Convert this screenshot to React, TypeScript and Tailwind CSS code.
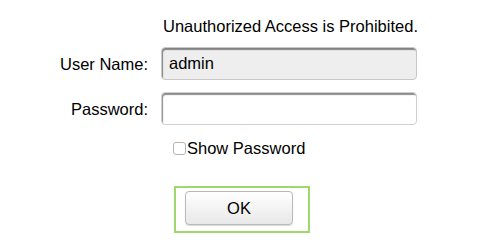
export default function App() {
  return (
    <div
      className="w-[480px] h-[240px] bg-white text-black overflow-hidden"
      style={{ fontFamily: '"Liberation Sans", Arial, sans-serif' }}
    >
      {/* Notice */}
      <p className="pl-[163px] pt-[16px] text-[16.5px] leading-[20px]">
        Unauthorized Access is Prohibited.
      </p>

      {/* User name */}
      <div className="flex items-center mt-[11px]">
        <label className="w-[148px] text-right text-[16.5px] leading-[20px]">User Name:</label>
        <input
          readOnly
          value="admin"
          className="ml-[13px] w-[256px] h-[33px] rounded-[4px] border border-[#c8c8c8] bg-[#eeeeee] pl-[7px] text-[16.5px] outline-none shadow-[inset_1px_2px_1px_rgba(0,0,0,0.45)]"
        />
      </div>

      {/* Password */}
      <div className="flex items-center mt-[12px]">
        <label className="w-[148px] text-right text-[16.5px] leading-[20px]">Password:</label>
        <input
          type="password"
          className="ml-[13px] w-[256px] h-[33px] rounded-[4px] border border-[#d0d0d0] bg-white pl-[7px] text-[16.5px] outline-none shadow-[inset_1px_2px_1px_rgba(0,0,0,0.45)]"
        />
      </div>

      {/* Show password */}
      <div className="flex items-center pl-[173px] mt-[13px]">
        <span className="w-[13px] h-[13px] rounded-[3px] border border-[#b4b4b4] bg-white" />
        <span className="ml-[1px] text-[16.5px] leading-[20px]">Show Password</span>
      </div>

      {/* OK */}
      <div className="ml-[174px] mt-[28px] w-[136px] h-[47px] border-2 border-[#9fd86c] pl-[9px] pt-[3px]">
        <button className="w-[108px] h-[34px] rounded-[4px] border border-[#b9b9b9] bg-gradient-to-b from-white to-[#e8e8e8] text-[16.5px] shadow-[0_1px_1px_rgba(0,0,0,0.15)]">
          OK
        </button>
      </div>
    </div>
  )
}
